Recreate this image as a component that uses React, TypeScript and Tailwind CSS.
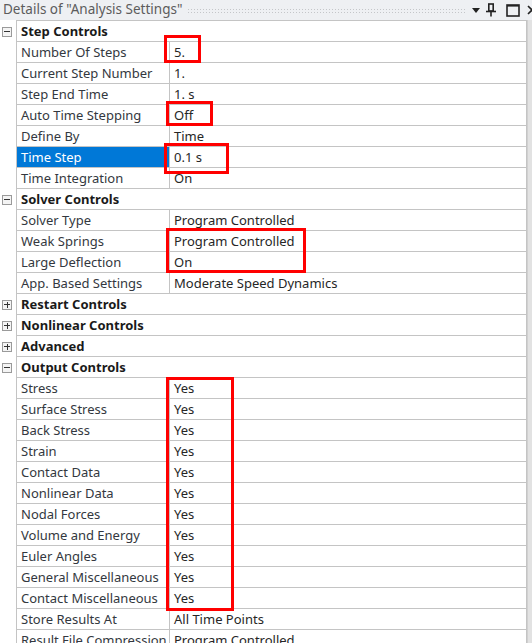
import React from "react";

type Row =
  | { kind: "section"; label: string; open: boolean }
  | { kind: "item"; label: string; value: string; selected?: boolean };

const rows: Row[] = [
  { kind: "section", label: "Step Controls", open: true },
  { kind: "item", label: "Number Of Steps", value: "5." },
  { kind: "item", label: "Current Step Number", value: "1." },
  { kind: "item", label: "Step End Time", value: "1. s" },
  { kind: "item", label: "Auto Time Stepping", value: "Off" },
  { kind: "item", label: "Define By", value: "Time" },
  { kind: "item", label: "Time Step", value: "0.1 s", selected: true },
  { kind: "item", label: "Time Integration", value: "On" },
  { kind: "section", label: "Solver Controls", open: true },
  { kind: "item", label: "Solver Type", value: "Program Controlled" },
  { kind: "item", label: "Weak Springs", value: "Program Controlled" },
  { kind: "item", label: "Large Deflection", value: "On" },
  { kind: "item", label: "App. Based Settings", value: "Moderate Speed Dynamics" },
  { kind: "section", label: "Restart Controls", open: false },
  { kind: "section", label: "Nonlinear Controls", open: false },
  { kind: "section", label: "Advanced", open: false },
  { kind: "section", label: "Output Controls", open: true },
  { kind: "item", label: "Stress", value: "Yes" },
  { kind: "item", label: "Surface Stress", value: "Yes" },
  { kind: "item", label: "Back Stress", value: "Yes" },
  { kind: "item", label: "Strain", value: "Yes" },
  { kind: "item", label: "Contact Data", value: "Yes" },
  { kind: "item", label: "Nonlinear Data", value: "Yes" },
  { kind: "item", label: "Nodal Forces", value: "Yes" },
  { kind: "item", label: "Volume and Energy", value: "Yes" },
  { kind: "item", label: "Euler Angles", value: "Yes" },
  { kind: "item", label: "General Miscellaneous", value: "Yes" },
  { kind: "item", label: "Contact Miscellaneous", value: "Yes" },
  { kind: "item", label: "Store Results At", value: "All Time Points" },
  { kind: "item", label: "Result File Compression", value: "Program Controlled" },
];

function ToggleBox({ open }: { open: boolean }) {
  return (
    <div className="w-[10px] h-[10px] border border-[#9a9a9a] bg-[#f4f4f4] flex items-center justify-center relative">
      <div className="w-[6px] h-[1px] bg-[#333]" />
      {!open && <div className="absolute w-[1px] h-[6px] bg-[#333]" />}
    </div>
  );
}

export default function App() {
  return (
    <div
      className="relative w-[532px] h-[643px] overflow-hidden bg-white text-[#262626]"
      style={{ fontFamily: '"Noto Sans", "Open Sans", sans-serif' }}
    >
      {/* title bar */}
      <div className="h-[20px] bg-[#eef0f3] flex items-center pl-[3px]">
        <span className="flex-none text-[13.5px] leading-none text-[#5c5c5c] whitespace-nowrap">
          Details of "Analysis Settings"
        </span>
        <div
          className="ml-[5px] h-[5px] flex-1"
          style={{
            backgroundImage:
              "radial-gradient(circle, #c4c6c9 0.8px, transparent 1px)",
            backgroundSize: "3px 3px",
          }}
        />
        <div className="flex-none w-[66px] flex items-center">
          <svg width="8" height="8" viewBox="0 0 8 8" className="ml-[6px] flex-none">
            <path d="M0 2 L8 2 L4 7 Z" fill="#222" />
          </svg>
          <svg width="10" height="14" viewBox="0 0 10 14" className="ml-[6px] flex-none">
            <rect x="2.8" y="1" width="4.4" height="7" fill="none" stroke="#222" strokeWidth="1.6" />
            <line x1="0" y1="8.5" x2="10" y2="8.5" stroke="#222" strokeWidth="1.6" />
            <line x1="5" y1="8.5" x2="5" y2="13.5" stroke="#222" strokeWidth="1.6" />
          </svg>
          <svg width="14" height="14" viewBox="0 0 14 14" className="ml-[10px] flex-none">
            <rect x="1" y="2" width="12" height="11" fill="none" stroke="#222" strokeWidth="1.6" />
            <line x1="1" y1="2.8" x2="13" y2="2.8" stroke="#222" strokeWidth="1.6" />
          </svg>
          <svg width="10" height="12" viewBox="0 0 10 12" className="ml-[7px] flex-none">
            <path d="M1 2 L9 10 M9 2 L1 10" stroke="#222" strokeWidth="1.6" />
          </svg>
        </div>
      </div>

      {/* table */}
      <div className="flex">
        <div className="flex flex-col w-[527px]">
          <div className="ml-[16px] h-[1px] bg-[#c4c4c4]" />
          {rows.map((r, i) =>
            r.kind === "section" ? (
              <div key={i} className="flex h-[21px]">
                <div className="w-[16px] flex items-center justify-center pr-[2px]">
                  <ToggleBox open={r.open} />
                </div>
                <div className="flex-1 flex items-center border-l border-r border-b border-[#c4c4c4] pl-[4px] text-[13px] font-bold text-[#1a1a1a] leading-none">
                  {r.label}
                </div>
              </div>
            ) : (
              <div key={i} className="flex h-[21px]">
                <div className="w-[16px]" />
                <div
                  className={
                    r.selected
                      ? "w-[153px] flex items-center border-l border-b border-[#c4c4c4] pl-[4px] text-[13px] leading-none bg-[#0078d7] text-white"
                      : "w-[153px] flex items-center border-l border-b border-[#c4c4c4] pl-[4px] text-[13px] leading-none text-[#333840]"
                  }
                >
                  {r.label}
                </div>
                <div className="flex-1 flex items-center border-l border-r border-b border-[#c4c4c4] pl-[4px] text-[13px] leading-none text-[#262626]">
                  {r.value}
                </div>
              </div>
            )
          )}
        </div>
        <div className="w-[5px] bg-[#e2e2e2] border-l border-[#d0d0d0]" />
      </div>

      {/* red annotation boxes */}
      <div className="absolute left-[164px] top-[35px] w-[37px] h-[28px] border-[3px] border-[#ff0000]" />
      <div className="absolute left-[166px] top-[101px] w-[47px] h-[25px] border-[3px] border-[#ff0000]" />
      <div className="absolute left-[164px] top-[143px] w-[65px] h-[31px] border-[3px] border-[#ff0000]" />
      <div className="absolute left-[166px] top-[228px] w-[140px] h-[45px] border-[3px] border-[#ff0000]" />
      <div className="absolute left-[166px] top-[377px] w-[68px] h-[234px] border-[3px] border-[#ff0000]" />
    </div>
  );
}
